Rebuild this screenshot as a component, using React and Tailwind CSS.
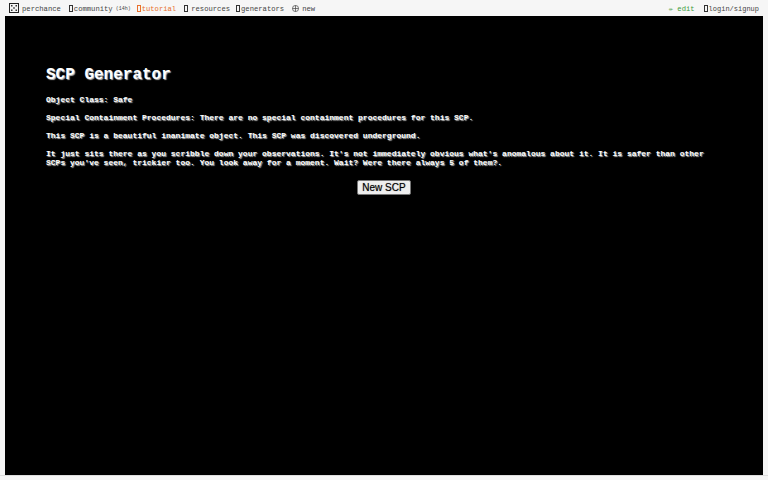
function Tofu({ className = 'border-[#333]' }) {
  return <span className={`inline-block w-[4px] h-[7px] border-[0.8px] ${className}`} />;
}

function Dice() {
  return (
    <svg width="10" height="10" viewBox="0 0 10 10" className="block -mt-[2px]">
      <rect x="0.5" y="0.5" width="9" height="9" fill="#f6f6f6" stroke="#222" />
      <rect x="2" y="2" width="1.5" height="1.5" fill="#333" />
      <rect x="6.5" y="2" width="1.5" height="1.5" fill="#333" />
      <rect x="4.25" y="4.25" width="1.5" height="1.5" fill="#333" />
      <rect x="2" y="6.5" width="1.5" height="1.5" fill="#333" />
      <rect x="6.5" y="6.5" width="1.5" height="1.5" fill="#333" />
    </svg>
  );
}

function Globe() {
  return (
    <svg width="7" height="7" viewBox="0 0 8 8" fill="none" stroke="#444" strokeWidth="0.8" className="block">
      <circle cx="4" cy="4" r="3.5" />
      <path d="M4 0.5v7M0.5 4h7" />
    </svg>
  );
}

export default function App() {
  return (
    <div className="w-[768px] h-[480px] flex flex-col bg-[#f6f6f6] overflow-hidden font-['Liberation_Mono',monospace]">
      {/* top nav */}
      <div className="h-4 shrink-0 flex items-center justify-between pt-[2px] pl-[9px] pr-[9px] text-[7.2px] text-[#444]">
        <div className="flex items-center">
          <Dice />
          <span className="ml-[3px]">perchance</span>
          <span className="ml-[8px] flex items-center gap-[1px]">
            <Tofu />
            <span>community</span>
            <span className="ml-[2px] text-[5px] leading-none mt-[1px]">(14h)</span>
          </span>
          <span className="ml-[6px] flex items-center gap-[1px] text-[#e8702c]">
            <Tofu className="border-[#e8702c]" />
            <span>tutorial</span>
          </span>
          <span className="ml-[8px] flex items-center gap-[3px]">
            <Tofu />
            <span>resources</span>
          </span>
          <span className="ml-[6px] flex items-center gap-[1px]">
            <Tofu />
            <span>generators</span>
          </span>
          <span className="ml-[8px] flex items-center gap-[3px]">
            <Globe />
            <span>new</span>
          </span>
        </div>
        <div className="flex items-center">
          <span className="text-[#3a9a3a]">✏ edit</span>
          <span className="ml-[9px] flex items-center gap-[1px] text-[7px]">
            <Tofu />
            <span>login/signup</span>
          </span>
        </div>
      </div>

      {/* generator frame */}
      <div className="mx-[5px] h-[459px] shrink-0 bg-black text-white font-bold text-[8px] leading-[9px] px-[41px] pt-[51px] [text-shadow:1px_1px_1px_#bbb]">
        <h1 className="text-base leading-[16px] mb-[12px]">SCP Generator</h1>
        <p>Object Class: Safe</p>
        <p className="mt-[9px]">Special Containment Procedures: There are no special containment procedures for this SCP.</p>
        <p className="mt-[9px]">This SCP is a beautiful inanimate object. This SCP was discovered underground.</p>
        <p className="mt-[9px]">It just sits there as you scribble down your observations. It's not immediately obvious what's anomalous about it. It is safer than other SCPs you've seen, trickier too. You look away for a moment. Wait? Were there always 5 of them?.</p>
        <div className="flex justify-center mt-[13px]">
          <button className="w-[54px] h-[15px] bg-[#efefef] border border-[#767676] rounded-[2px] text-black text-[10px] leading-none font-normal font-['Liberation_Sans',sans-serif] [text-shadow:0_0_1px_#777]">New SCP</button>
        </div>
      </div>
      <div className="h-px bg-[#ddd]" />
    </div>
  );
}
